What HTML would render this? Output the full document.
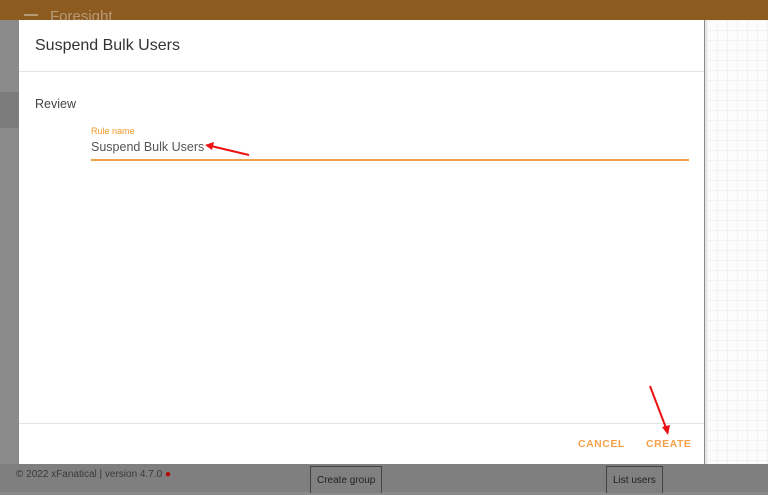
<!DOCTYPE html>
<html><head><style>
body{margin:0;width:768px;height:492px;overflow:hidden;position:relative;background:#8a8a8a;font-family:"Liberation Sans",sans-serif}
.hdr{position:absolute;left:0;top:0;width:768px;height:20px;background:#8d5a1f}
.hdr span{position:absolute;left:50px;top:8px;color:#b59a76;font-size:15px}
.menu{position:absolute;left:24px;top:14px;width:14px;height:2px;background:#b59a76}
.sel{position:absolute;left:0;top:92px;width:19px;height:36px;background:#7b7b7b}
.right{position:absolute;left:705px;top:20px;width:63px;height:444px;background:#fcfcfc;background-image:linear-gradient(#f2f2f2 1px,transparent 1px),linear-gradient(90deg,#f2f2f2 1px,transparent 1px);background-size:10px 10px;border-left:2px solid #e6e6e6}
.dlg{position:absolute;left:19px;top:20px;width:685px;height:444px;background:#fff}
.title{position:absolute;left:16px;top:17px;font-size:16px;color:#333}
.l1{position:absolute;left:0;top:51px;width:685px;height:1px;background:#e3e3e3}
.l2{position:absolute;left:0;top:403px;width:685px;height:1px;background:#e3e3e3}
.rev{position:absolute;left:16px;top:77px;font-size:12.5px;color:#444}
.lab{position:absolute;left:72px;top:106px;font-size:9px;color:#f39a2c}
.val{position:absolute;left:72px;top:120px;font-size:12.5px;color:#555}
.ul{position:absolute;left:72px;top:139px;width:598px;height:1.5px;background:#f0a04a}
.btn{position:absolute;top:418px;font-size:10.5px;font-weight:bold;letter-spacing:0.5px;color:#f5a14a}
.bot{position:absolute;left:0;top:464px;width:768px;height:28px;background:#7f7f7f}
.ft{position:absolute;left:16px;top:469px;font-size:10px;color:#3a3a3a}
.tag{position:absolute;top:466px;height:26px;border:1px solid #444;border-bottom:none;font-size:10px;color:#222;line-height:28px;padding:0 6px;background:#808080}
</style></head><body>
<div class="hdr"><div class="menu"></div><span>Foresight</span></div>
<div class="sel"></div>
<div class="right"></div>
<div class="bot"></div>
<div class="ft">© 2022 xFanatical | version 4.7.0 <span style="color:#b00">●</span></div>
<div class="tag" style="left:310px">Create group</div>
<div class="tag" style="left:606px">List users</div>
<div class="dlg">
<div class="title">Suspend Bulk Users</div>
<div class="l1"></div>
<div class="rev">Review</div>
<div class="lab">Rule name</div>
<div class="val">Suspend Bulk Users</div>
<div class="ul"></div>
<div class="l2"></div>
<div class="btn" style="left:559px">CANCEL</div>
<div class="btn" style="left:627px">CREATE</div>
</div>
<svg style="position:absolute;left:0;top:0" width="768" height="492">
<line x1="249" y1="155" x2="211" y2="146" stroke="#e11" stroke-width="2"/>
<polygon points="205,145 214,142 212,150" fill="#e11"/>
<line x1="650" y1="386" x2="666" y2="428" stroke="#e11" stroke-width="2"/>
<polygon points="668,435 662,427 670,425" fill="#e11"/>
</svg>
</body></html>
